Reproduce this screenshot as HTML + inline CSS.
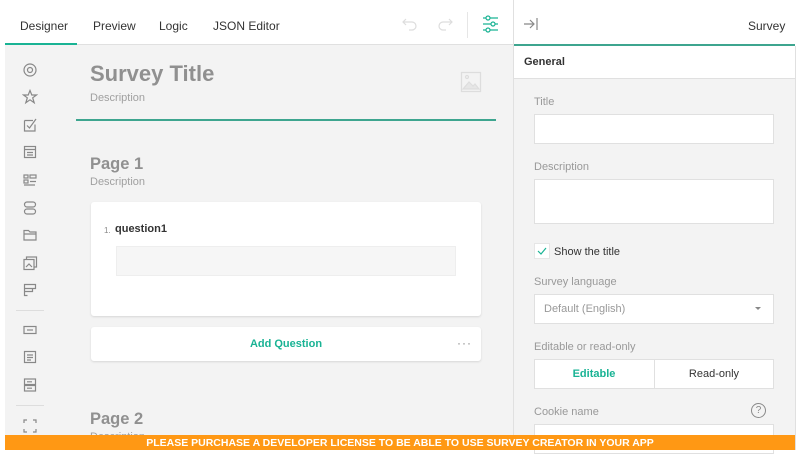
<!DOCTYPE html>
<html><head><meta charset="utf-8"><style>
*{box-sizing:border-box;margin:0;padding:0}
body{width:800px;height:450px;overflow:hidden;background:#fff;font-family:"Liberation Sans",sans-serif;position:relative;font-size:12px;color:#404040}
.abs{position:absolute}
.tab{position:absolute;top:19px;font-size:12px;color:#333}
svg.i{position:absolute;fill:none;stroke:#888;stroke-width:1.2}
.lbl{position:absolute;left:534px;font-size:11px;color:#999}
.inp{position:absolute;left:534px;width:240px;background:#fff;border:1px solid #e0e0e0}
</style></head><body>
<div class="tab" style="left:20px">Designer</div>
<div class="tab" style="left:93px">Preview</div>
<div class="tab" style="left:159px">Logic</div>
<div class="tab" style="left:213px">JSON Editor</div>
<div class="abs" style="left:5px;top:43px;width:72px;height:2px;background:#19b394"></div>
<div class="abs" style="left:77px;top:44px;width:436px;height:1px;background:#e0e0e0"></div>
<svg class="i" style="left:401px;top:16px;stroke:#ddd" width="18" height="16"><path d="M5 3L2 6L5 9M2 6H11A4 4 0 0 1 11 14H8"/></svg>
<svg class="i" style="left:436px;top:16px;stroke:#ddd" width="18" height="16"><path d="M13 3L16 6L13 9M16 6H7A4 4 0 0 0 7 14H10"/></svg>
<div class="abs" style="left:467px;top:12px;width:1px;height:26px;background:#e6e6e6"></div>
<svg class="i" style="left:481px;top:15px;stroke:#19b394" width="18" height="18"><path d="M2 3H17M2 9H17M2 15H17"/><circle cx="7" cy="3" r="2" fill="#fff"/><circle cx="12" cy="9" r="2" fill="#fff"/><circle cx="7" cy="15" r="2" fill="#fff"/></svg>
<div class="abs" style="left:5px;top:45px;width:508px;height:390px;background:#f3f3f3"></div>
<div class="abs" style="left:513px;top:0;width:1px;height:450px;background:#e0e0e0"></div>
<svg class="i" style="left:22px;top:62px" width="16" height="16"><circle cx="8" cy="8" r="6"/><circle cx="8" cy="8" r="2.5"/></svg>
<svg class="i" style="left:22px;top:89px" width="16" height="16"><path d="M8 1.5L9.8 6H14.5L10.7 8.8L12.2 13.8L8 10.8L3.8 13.8L5.3 8.8L1.5 6H6.2Z"/></svg>
<svg class="i" style="left:22px;top:117px" width="16" height="16"><path d="M2.5 3.5H11M2.5 3.5V14H13V7.5M5 8.5L7.5 11L14 2"/></svg>
<svg class="i" style="left:22px;top:144px" width="16" height="16"><rect x="2.5" y="2.5" width="11" height="11"/><path d="M2.5 5.5H13.5M5 8.5H11M5 11H11"/></svg>
<svg class="i" style="left:22px;top:172px" width="16" height="16"><rect x="2" y="3" width="4" height="3"/><rect x="8" y="3" width="6" height="3"/><rect x="2" y="8" width="4" height="3"/><path d="M2 13H13M8 9.5H14"/></svg>
<svg class="i" style="left:22px;top:200px" width="16" height="16"><rect x="2.5" y="2" width="11" height="5" rx="2.5"/><rect x="2.5" y="9" width="11" height="5" rx="2.5"/></svg>
<svg class="i" style="left:22px;top:227px" width="16" height="16"><path d="M2 3.5H6.5L8 5H14V13H2ZM2 7H14"/></svg>
<svg class="i" style="left:22px;top:255px" width="16" height="16"><rect x="4.5" y="2" width="10" height="10"/><rect x="2" y="4.5" width="10" height="10" fill="#f3f3f3"/><path d="M4 12L7 9L10 12"/></svg>
<svg class="i" style="left:22px;top:282px" width="16" height="16"><path d="M2.5 2.5H13.5V6.5H2.5ZM2.5 6.5V13.5H5.5M2.5 9.5H10.5V6.5"/></svg>
<div class="abs" style="left:16px;top:310px;width:28px;height:1px;background:#ddd"></div>
<svg class="i" style="left:22px;top:322px" width="16" height="16"><rect x="2" y="4.5" width="12" height="7"/><path d="M5 8H11"/></svg>
<svg class="i" style="left:22px;top:349px" width="16" height="16"><rect x="2.5" y="2.5" width="11" height="11"/><path d="M5 6H11M5 8.5H11M5 11H9"/></svg>
<svg class="i" style="left:22px;top:377px" width="16" height="16"><rect x="2.5" y="2" width="11" height="5.5"/><rect x="2.5" y="8.5" width="11" height="5.5"/><path d="M5 4.8H10M5 11.2H10"/></svg>
<div class="abs" style="left:16px;top:405px;width:28px;height:1px;background:#ddd"></div>
<svg class="i" style="left:22px;top:418px" width="16" height="16"><path d="M2 5V2H5M11 2H14V5M14 11V14H11M5 14H2V11"/></svg>
<div class="abs" style="left:90px;top:61px;font-size:22px;font-weight:bold;color:#909090">Survey Title</div>
<div class="abs" style="left:90px;top:92px;font-size:11px;color:#a0a0a0">Description</div>
<svg class="i" style="left:460px;top:71px;stroke:#ddd" width="22" height="22"><rect x="1.5" y="1.5" width="19" height="19"/><path d="M3 18L9 11L13 15L15 13L19 18Z" fill="#e6e6e6"/><circle cx="7" cy="6" r="1.5"/></svg>
<div class="abs" style="left:76px;top:119px;width:420px;height:2px;background:#3da58f"></div>
<div class="abs" style="left:90px;top:155px;font-size:16.5px;font-weight:bold;color:#909090">Page 1</div>
<div class="abs" style="left:90px;top:176px;font-size:11px;color:#a0a0a0">Description</div>
<div class="abs" style="left:91px;top:202px;width:390px;height:114px;background:#fff;border-radius:3px;box-shadow:0 1px 2px rgba(0,0,0,.12)"></div>
<div class="abs" style="left:104px;top:226px;font-size:8px;color:#888">1.</div>
<div class="abs" style="left:115px;top:223px;font-size:11px;font-weight:bold;color:#333">question1</div>
<div class="abs" style="left:116px;top:246px;width:340px;height:30px;background:#f6f6f6;border:1px solid #eee"></div>
<div class="abs" style="left:91px;top:327px;width:390px;height:34px;background:#fff;border-radius:3px;box-shadow:0 1px 2px rgba(0,0,0,.12)"></div>
<div class="abs" style="left:91px;top:338px;width:390px;text-align:center;font-size:11px;font-weight:bold;color:#19b394">Add Question</div>
<div class="abs" style="left:457px;top:336px;font-size:12px;color:#888;letter-spacing:1px">···</div>
<div class="abs" style="left:90px;top:410px;font-size:16.5px;font-weight:bold;color:#909090">Page 2</div>
<div class="abs" style="left:90px;top:431px;font-size:11px;color:#a0a0a0">Description</div>
<svg class="i" style="left:522px;top:16px" width="18" height="16"><path d="M2 8H12M8 4L12 8L8 12M15 2V14"/></svg>
<div class="abs" style="left:748px;top:19px;font-size:12px;color:#333">Survey</div>
<div class="abs" style="left:514px;top:44px;width:281px;height:2px;background:#3da58f"></div>
<div class="abs" style="left:524px;top:56px;font-size:11px;font-weight:bold;color:#333">General</div>
<div class="abs" style="left:514px;top:78px;width:281px;height:372px;background:#f3f3f3;border-top:1px solid #e0e0e0"></div>
<div class="abs" style="left:795px;top:46px;width:1px;height:404px;background:#e0e0e0"></div>
<div class="lbl" style="top:96px">Title</div>
<div class="inp" style="top:114px;height:30px"></div>
<div class="lbl" style="top:161px">Description</div>
<div class="inp" style="top:179px;height:45px"></div>
<div class="abs" style="left:534px;top:243px;width:16px;height:16px;background:#fff;border:1px solid #e6e6e6"></div>
<svg class="i" style="left:535px;top:244px;stroke:#19b394" width="14" height="14"><path d="M3 7L6 10L11 4"/></svg>
<div class="abs" style="left:554px;top:246px;font-size:11px;color:#333">Show the title</div>
<div class="lbl" style="top:276px">Survey language</div>
<div class="inp" style="top:294px;height:30px"></div>
<div class="abs" style="left:544px;top:303px;font-size:11px;color:#999">Default (English)</div>
<div class="abs" style="left:755px;top:307px;width:0;height:0;border-left:3px solid transparent;border-right:3px solid transparent;border-top:3px solid #888"></div>
<div class="lbl" style="top:341px">Editable or read-only</div>
<div class="inp" style="top:359px;height:30px"></div>
<div class="abs" style="left:654px;top:359px;width:1px;height:30px;background:#e0e0e0"></div>
<div class="abs" style="left:534px;top:368px;width:120px;text-align:center;font-size:11px;font-weight:bold;color:#19b394">Editable</div>
<div class="abs" style="left:654px;top:368px;width:120px;text-align:center;font-size:11px;color:#333">Read-only</div>
<div class="lbl" style="top:406px">Cookie name</div>
<div class="abs" style="left:751px;top:403px;width:15px;height:15px;border:1.3px solid #888;border-radius:50%;font-size:10px;color:#888;text-align:center;line-height:13px">?</div>
<div class="inp" style="top:424px;height:30px"></div>
<div class="abs" style="left:5px;top:435px;width:790px;height:15px;background:#ff9814;color:#fff;font-size:10.5px;font-weight:bold;text-align:center;line-height:17px">PLEASE PURCHASE A DEVELOPER LICENSE TO BE ABLE TO USE SURVEY CREATOR IN YOUR APP</div>
</body></html>
